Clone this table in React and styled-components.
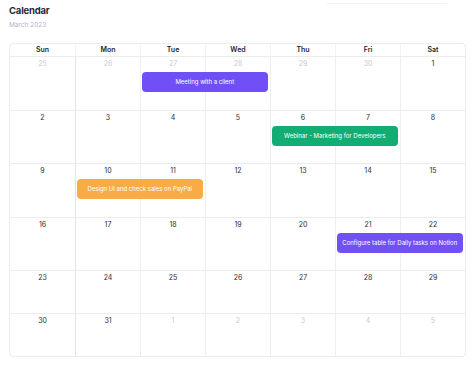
import React from 'react';
import styled, { createGlobalStyle } from 'styled-components';

const GlobalStyle = createGlobalStyle`
  html, body {
    margin: 0;
    background: #ffffff;
  }
  body {
    font-family: Inter, "Noto Sans", sans-serif;
  }
`;

const Page = styled.div`
  width: 474px;
  height: 367px;
  box-sizing: border-box;
  padding: 5px 8px 0 9px;
  overflow: hidden;
`;

const Header = styled.div`
  display: flex;
  justify-content: space-between;
  align-items: flex-start;
`;

const Title = styled.h1`
  margin: 0;
  font-size: 9.5px;
  line-height: 12px;
  font-weight: 700;
  color: #2a2937;
  letter-spacing: -0.2px;
`;

const Subtitle = styled.div`
  margin-top: 3px;
  font-size: 6.5px;
  line-height: 10px;
  color: #b4b0cc;
`;

const SearchEdge = styled.div`
  width: 120px;
  height: 1px;
  margin: -2px 19px 0 0;
  background: #f3f3f3;
`;

const Board = styled.div`
  margin-top: 13px;
  border: 1px solid #ececec;
  border-radius: 4px;
  overflow: hidden;
`;

const DayNames = styled.div`
  display: grid;
  grid-template-columns: repeat(7, 1fr);
  height: 12px;
`;

const DayName = styled.div`
  font-size: 7px;
  line-height: 12px;
  font-weight: 600;
  text-align: center;
  color: #1f1f2a;
  border-left: ${p => (p.$first ? 'none' : '1px solid #f4f4f4')};
`;

const Week = styled.div`
  display: grid;
  grid-template-columns: repeat(7, 1fr);
  grid-template-rows: 15px auto;
  border-top: 1px solid #ececec;
`;

const Cell = styled.div`
  grid-row: 1 / 3;
  grid-column: ${p => p.$col};
  min-height: 42px;
  padding-top: 3px;
  box-sizing: border-box;
  border-left: ${p => (p.$col === 1 ? 'none' : p.$col === 2 ? '1px solid #e3e3e3' : '1px solid #eeeeee')};
`;

const DayNum = styled.div`
  font-size: 7px;
  line-height: 8px;
  text-align: center;
  color: ${p => (p.$muted ? '#c9c9cf' : '#2c2c34')};
`;

const Event = styled.div`
  grid-row: 2;
  grid-column: ${p => p.$start} / span ${p => p.$span};
  position: relative;
  z-index: 1;
  height: 20px;
  margin: 0 2px 17.5px 1.5px;
  border-radius: 4px;
  background: ${p => p.$color};
  color: #ffffff;
  font-size: 6px;
  line-height: 20px;
  text-align: center;
  white-space: nowrap;
`;

const days = ['Sun', 'Mon', 'Tue', 'Wed', 'Thu', 'Fri', 'Sat'];

const weeks = [
  {
    days: [[25, true], [26, true], [27, true], [28, true], [29, true], [30, true], [1]],
    event: { title: 'Meeting with a client', start: 3, span: 2, color: '#7050f6' },
  },
  {
    days: [[2], [3], [4], [5], [6], [7], [8]],
    event: { title: 'Webinar - Marketing for Developers', start: 5, span: 2, color: '#12ad72' },
  },
  {
    days: [[9], [10], [11], [12], [13], [14], [15]],
    event: { title: 'Design UI and check sales on PayPal', start: 2, span: 2, color: '#fbab44' },
  },
  {
    days: [[16], [17], [18], [19], [20], [21], [22]],
    event: { title: 'Configure table for Daily tasks on Notion', start: 6, span: 2, color: '#7150f6' },
  },
  { days: [[23], [24], [25], [26], [27], [28], [29]] },
  { days: [[30], [31], [1, true], [2, true], [3, true], [4, true], [5, true]] },
];

export default function App() {
  return (
    <Page>
      <GlobalStyle />
      <Header>
        <div>
          <Title>Calendar</Title>
          <Subtitle>March 2023</Subtitle>
        </div>
        <SearchEdge />
      </Header>
      <Board>
        <DayNames>
          {days.map((d, i) => (
            <DayName key={d} $first={i === 0}>{d}</DayName>
          ))}
        </DayNames>
        {weeks.map((w, wi) => (
          <Week key={wi}>
            {w.days.map(([n, muted], i) => (
              <Cell key={i} $col={i + 1}>
                <DayNum $muted={muted}>{n}</DayNum>
              </Cell>
            ))}
            {w.event && (
              <Event $start={w.event.start} $span={w.event.span} $color={w.event.color}>
                {w.event.title}
              </Event>
            )}
          </Week>
        ))}
      </Board>
    </Page>
  );
}
